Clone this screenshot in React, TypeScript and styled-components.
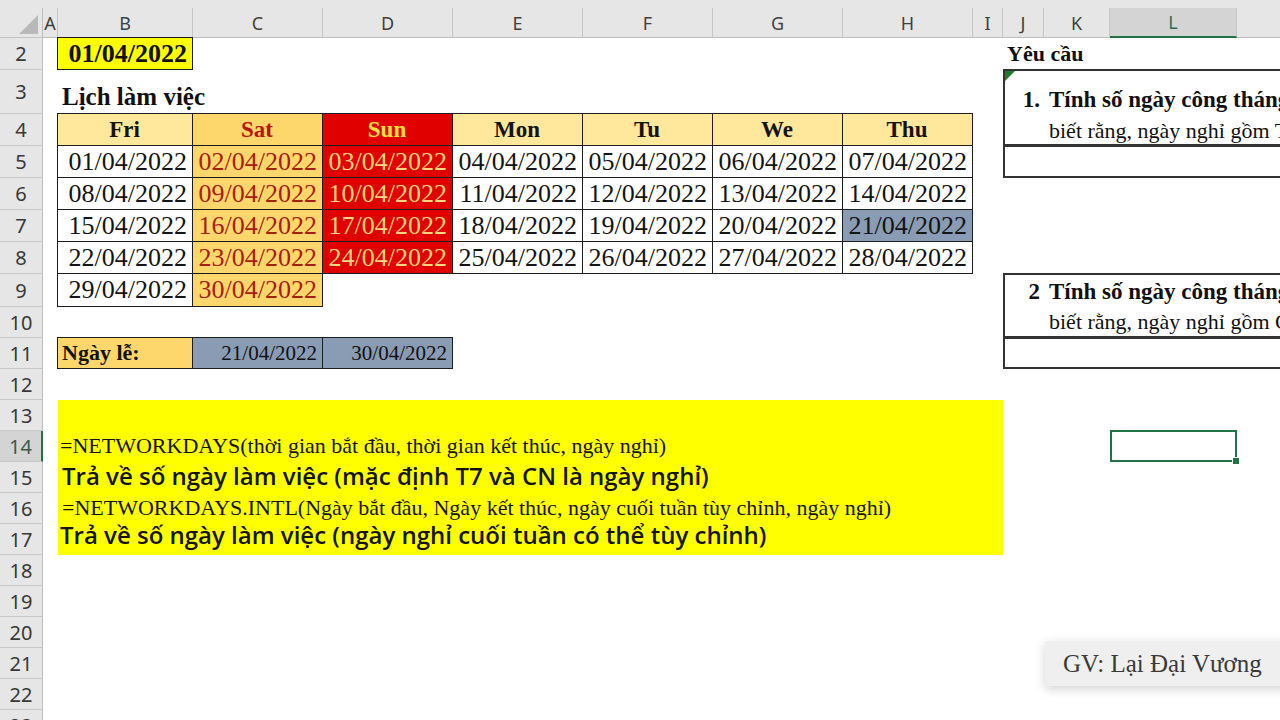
import React from 'react';
import styled, { createGlobalStyle, css } from 'styled-components';

const GlobalStyle = createGlobalStyle`
  html, body {
    margin: 0;
    padding: 0;
    background: #ffffff;
  }
  body {
    width: 1280px;
    height: 720px;
    overflow: hidden;
  }
`;

// column widths: row header, A..M
const COLS = [43, 15, 135, 130, 130, 130, 130, 130, 130, 30, 41, 66, 127, 200];
// row heights: column header, rows 2..23
const ROWS = [38, 32, 44, 32, 32, 32, 32, 32, 33, 31, 31, 31, 31, 31, 31, 31, 31, 31, 31, 31, 31, 31, 31];
const LETTERS = ['A', 'B', 'C', 'D', 'E', 'F', 'G', 'H', 'I', 'J', 'K', 'L', 'M'];

const SERIF = `'Liberation Serif', 'Times New Roman', serif`;
const UI = `'Noto Sans', 'Open Sans', sans-serif`;

const Sheet = styled.div`
  position: relative;
  display: grid;
  grid-template-columns: ${COLS.map((c) => `${c}px`).join(' ')};
  grid-template-rows: ${ROWS.map((r) => `${r}px`).join(' ')};
  width: 1280px;
  height: 720px;
  overflow: hidden;
  background: #ffffff;
  font-family: ${SERIF};
  color: #111;
`;

const HeaderBand = styled.div`
  grid-column: 1 / -1;
  grid-row: 1;
  background: #e6e6e6;
  border-bottom: 1px solid #c2c2c2;
`;

const Corner = styled.div`
  grid-column: 1;
  grid-row: 1;
  position: relative;
  border-right: 1px solid #bdbdbd;
  margin-top: 8px;

  &::after {
    content: '';
    position: absolute;
    right: 4px;
    bottom: 4px;
    width: 0;
    height: 0;
    border-left: 19px solid transparent;
    border-bottom: 19px solid #b9b9b9;
  }
`;

const ColHead = styled.div<{ $col: number; $sel?: boolean }>`
  grid-column: ${(p) => p.$col};
  grid-row: 1;
  margin-top: 8px;
  display: flex;
  align-items: center;
  justify-content: center;
  white-space: nowrap;
  background: ${(p) => (p.$sel ? '#d4d4d4' : '#e6e6e6')};
  border-right: 1px solid #c6c6c6;
  border-bottom: ${(p) => (p.$sel ? '2px solid #217346' : '1px solid #bdbdbd')};
  font-family: ${UI};
  font-size: 18px;
  color: ${(p) => (p.$sel ? '#2f6d48' : '#404040')};
`;

const RowHead = styled.div<{ $row: number; $sel?: boolean }>`
  grid-column: 1;
  grid-row: ${(p) => p.$row};
  display: flex;
  align-items: center;
  justify-content: center;
  background: ${(p) => (p.$sel ? '#d4d4d4' : '#e6e6e6')};
  border-bottom: 1px solid #c9c9c9;
  border-right: ${(p) => (p.$sel ? '2px solid #217346' : '1px solid #bdbdbd')};
  font-family: ${UI};
  font-size: 20px;
  color: ${(p) => (p.$sel ? '#3d5a48' : '#383838')};
`;

type CellProps = {
  $col: string | number;
  $row: string | number;
  $bg?: string;
  $color?: string;
  $bold?: boolean;
  $size?: number;
  $align?: 'left' | 'center' | 'right';
  $valign?: 'center' | 'end';
  $boxed?: boolean;
};

const Cell = styled.div<CellProps>`
  grid-column: ${(p) => p.$col};
  grid-row: ${(p) => p.$row};
  display: flex;
  align-items: ${(p) => (p.$valign === 'end' ? 'flex-end' : 'center')};
  justify-content: ${(p) =>
    p.$align === 'center' ? 'center' : p.$align === 'right' ? 'flex-end' : 'flex-start'};
  padding: ${(p) => (p.$valign === 'end' ? '0 5px 3px 4px' : '0 5px 0 4px')};
  background: ${(p) => p.$bg || 'transparent'};
  color: ${(p) => p.$color || '#111'};
  font-weight: ${(p) => (p.$bold ? 700 : 400)};
  font-size: ${(p) => p.$size || 26}px;
  white-space: nowrap;
  ${(p) =>
    p.$boxed &&
    css`
      border: 1px solid #1d1d1d;
      margin: -1px 0 0 -1px;
    `}
`;

const NoteBox = styled.div`
  grid-column: 3 / 11;
  grid-row: 13 / 18;
  display: flex;
  flex-direction: column;
  padding: 34px 0 0 2px;
  background: #ffff00;
  white-space: nowrap;
`;

const NoteLine = styled.div<{ $h: number; $sans?: boolean; $indent?: number }>`
  display: flex;
  align-items: center;
  height: ${(p) => p.$h}px;
  padding-left: ${(p) => p.$indent || 0}px;
  font-family: ${(p) => (p.$sans ? `'Open Sans', 'Noto Sans', sans-serif` : SERIF)};
  font-weight: ${(p) => (p.$sans ? 600 : 400)};
  font-size: ${(p) => (p.$sans ? 24 : 22)}px;
  color: #141414;
`;

const ReqCell = styled.div<{ $row: string; $pt?: number; $lh?: number }>`
  position: relative;
  grid-column: 11 / 15;
  grid-row: ${(p) => p.$row};
  display: flex;
  flex-direction: column;
  padding-top: ${(p) => p.$pt || 0}px;
  border: 2px solid #333;
  margin: -1px 0 0 0;
  white-space: nowrap;
  font-size: 22px;
  line-height: ${(p) => p.$lh || 31}px;
`;

const Flag = styled.span`
  position: absolute;
  left: 0;
  top: 0;
  width: 0;
  height: 0;
  border-top: 10px solid #1f7a32;
  border-right: 10px solid transparent;
`;

const ReqTitle = styled.div`
  display: flex;
  font-weight: 700;
  font-size: 23px;
`;

const ReqNum = styled.span<{ $w: number }>`
  width: ${(p) => p.$w}px;
  text-align: right;
  margin-right: 9px;
`;

const ReqSub = styled.div`
  padding-left: 44px;
`;

const SelectedCell = styled.div`
  position: relative;
  grid-column: 13;
  grid-row: 14;
  border: 2px solid #217346;
  margin: -1px 0 0 0;

  &::after {
    content: '';
    position: absolute;
    right: -5px;
    bottom: -5px;
    width: 6px;
    height: 6px;
    background: #217346;
    border: 1px solid #ffffff;
  }
`;

const Watermark = styled.div`
  position: absolute;
  left: 1045px;
  top: 641px;
  width: 250px;
  height: 45px;
  display: flex;
  align-items: center;
  padding-left: 18px;
  box-sizing: border-box;
  background: #efefef;
  box-shadow: 0 3px 10px rgba(0, 0, 0, 0.18);
  font-family: ${SERIF};
  font-size: 25px;
  color: #3a3a3a;
`;

const DAYS = ['Fri', 'Sat', 'Sun', 'Mon', 'Tu', 'We', 'Thu'];
const WEEKS = [
  ['01', '02', '03', '04', '05', '06', '07'],
  ['08', '09', '10', '11', '12', '13', '14'],
  ['15', '16', '17', '18', '19', '20', '21'],
  ['22', '23', '24', '25', '26', '27', '28'],
  ['29', '30'],
];
const HOLIDAYS = ['21'];

const headStyle = (i: number) => {
  if (i === 1) return { bg: '#fdd66c', color: '#b8140a' };
  if (i === 2) return { bg: '#e10000', color: '#ffe23a' };
  return { bg: '#ffe79c', color: '#141414' };
};

const dayStyle = (i: number, d: string) => {
  if (HOLIDAYS.includes(d)) return { bg: '#8a9bb4', color: '#141414' };
  if (i === 1) return { bg: '#fdd66c', color: '#a8200f' };
  if (i === 2) return { bg: '#e10000', color: '#fbd77a' };
  return { bg: '#ffffff', color: '#141414' };
};

export default function App() {
  return (
    <>
      <GlobalStyle />
      <Sheet>
        <HeaderBand />
        <Corner />
        {LETTERS.map((l, i) => (
          <ColHead key={l} $col={i + 2} $sel={l === 'L'}>
            {l}
          </ColHead>
        ))}
        {ROWS.slice(1).map((_, i) => (
          <RowHead key={i} $row={i + 2} $sel={i + 2 === 14}>
            {i + 2}
          </RowHead>
        ))}

        <Cell $col={3} $row={2} $bg="#ffff00" $bold $size={26} $align="right" $boxed>
          01/04/2022
        </Cell>
        <Cell $col={3} $row={3} $bold $size={25} $valign="end">
          Lịch làm việc
        </Cell>

        {DAYS.map((d, i) => {
          const s = headStyle(i);
          return (
            <Cell key={d} $col={i + 3} $row={4} $bg={s.bg} $color={s.color} $bold $size={23} $align="center" $boxed>
              {d}
            </Cell>
          );
        })}
        {WEEKS.map((week, w) =>
          week.map((d, i) => {
            const s = dayStyle(i, d);
            return (
              <Cell key={d} $col={i + 3} $row={w + 5} $bg={s.bg} $color={s.color} $align="right" $boxed>
                {d}/04/2022
              </Cell>
            );
          })
        )}

        <Cell $col={3} $row={11} $bg="#fdd66c" $bold $size={22} $boxed>
          Ngày lễ:
        </Cell>
        <Cell $col={4} $row={11} $bg="#8a9bb4" $size={21} $align="right" $boxed>
          21/04/2022
        </Cell>
        <Cell $col={5} $row={11} $bg="#8a9bb4" $size={21} $align="right" $boxed>
          30/04/2022
        </Cell>

        <NoteBox>
          <NoteLine $h={24}>=NETWORKDAYS(thời gian bắt đầu, thời gian kết thúc, ngày nghỉ)</NoteLine>
          <NoteLine $h={34} $sans $indent={2}>
            Trả về số ngày làm việc (mặc định T7 và CN là ngày nghỉ)
          </NoteLine>
          <NoteLine $h={32} $indent={2}>
            =NETWORKDAYS.INTL(Ngày bắt đầu, Ngày kết thúc, ngày cuối tuần tùy chỉnh, ngày nghỉ)
          </NoteLine>
          <NoteLine $h={20} $sans>
            Trả về số ngày làm việc (ngày nghỉ cuối tuần có thể tùy chỉnh)
          </NoteLine>
        </NoteBox>

        <Cell $col="11 / 15" $row={2} $bold $size={22}>
          Yêu cầu
        </Cell>
        <ReqCell $row="3 / 5" $pt={13}>
          <Flag />
          <ReqTitle>
            <ReqNum $w={35}>1.</ReqNum>
            Tính số ngày công tháng 4/2022
          </ReqTitle>
          <ReqSub>biết rằng, ngày nghỉ gồm T7, CN và ngày lễ</ReqSub>
        </ReqCell>
        <ReqCell $row="5" />
        <ReqCell $row="9 / 11" $pt={2} $lh={30}>
          <ReqTitle>
            <ReqNum $w={35}>2</ReqNum>
            Tính số ngày công tháng 4/2022
          </ReqTitle>
          <ReqSub>biết rằng, ngày nghỉ gồm CN và ngày lễ</ReqSub>
        </ReqCell>
        <ReqCell $row="11" />

        <SelectedCell />
        <Watermark>GV: Lại Đại Vương</Watermark>
      </Sheet>
    </>
  );
}
